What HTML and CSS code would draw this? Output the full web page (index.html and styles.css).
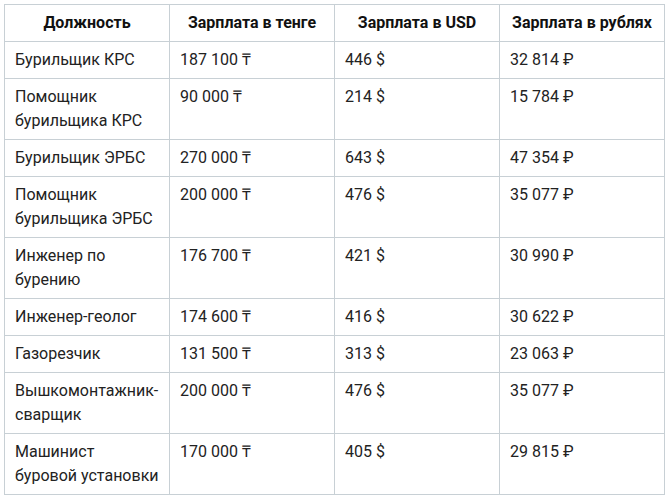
FILE: index.html
```html
<!DOCTYPE html>
<html lang="ru">
<head>
<meta charset="utf-8">
<link rel="stylesheet" href="styles.css">
</head>
<body>
<table class="salary">
  <thead>
    <tr><th>Должность</th><th>Зарплата в тенге</th><th>Зарплата в USD</th><th>Зарплата в рублях</th></tr>
  </thead>
  <tbody>
    <tr><td>Бурильщик КРС</td><td>187 100 ₸</td><td>446 $</td><td>32 814 ₽</td></tr>
    <tr><td>Помощник бурильщика КРС</td><td>90 000 ₸</td><td>214 $</td><td>15 784 ₽</td></tr>
    <tr><td>Бурильщик ЭРБС</td><td>270 000 ₸</td><td>643 $</td><td>47 354 ₽</td></tr>
    <tr><td>Помощник бурильщика ЭРБС</td><td>200 000 ₸</td><td>476 $</td><td>35 077 ₽</td></tr>
    <tr><td>Инженер по бурению</td><td>176 700 ₸</td><td>421 $</td><td>30 990 ₽</td></tr>
    <tr><td>Инженер-геолог</td><td>174 600 ₸</td><td>416 $</td><td>30 622 ₽</td></tr>
    <tr><td>Газорезчик</td><td>131 500 ₸</td><td>313 $</td><td>23 063 ₽</td></tr>
    <tr><td>Вышкомонтажник-сварщик</td><td>200 000 ₸</td><td>476 $</td><td>35 077 ₽</td></tr>
    <tr><td>Машинист буровой установки</td><td>170 000 ₸</td><td>405 $</td><td>29 815 ₽</td></tr>
  </tbody>
</table>
</body>
</html>
```
FILE: styles.css
```css
html, body {
  margin: 0;
  padding: 0;
  background: #ffffff;
}
body {
  padding: 4px;
  font-family: Roboto, "Liberation Sans", sans-serif;
  font-size: 16px;
  color: #222222;
}
.salary {
  width: 661px;
  table-layout: fixed;
  border-collapse: collapse;
}
.salary th,
.salary td {
  border: 1px solid #c8d0d5;
  padding: 6px 10px;
  line-height: 24px;
  vertical-align: top;
  text-align: left;
}
.salary th {
  font-weight: bold;
  text-align: center;
  color: #111111;
}
```
